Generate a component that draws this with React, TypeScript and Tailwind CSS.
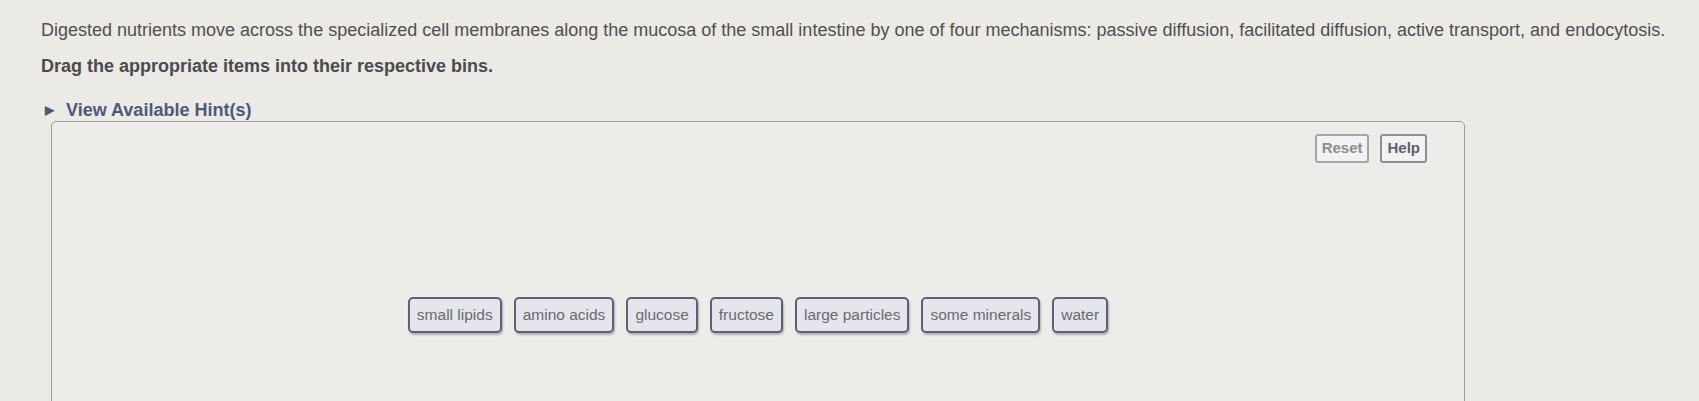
import React from "react";

const items = [
  "small lipids",
  "amino acids",
  "glucose",
  "fructose",
  "large particles",
  "some minerals",
  "water",
];

export default function App() {
  return (
    <div
      className="w-[1699px] h-[401px] overflow-hidden bg-[#ebeae5] text-[#505050]"
      style={{ fontFamily: '"Liberation Sans", Arial, sans-serif' }}
    >
      <div className="pl-[41px] pt-[19px]">
        <p className="whitespace-nowrap text-[18px] leading-[22px]">
          Digested nutrients move across the specialized cell membranes along the mucosa of the small intestine by one of four mechanisms: passive diffusion, facilitated diffusion, active transport, and endocytosis.
        </p>
        <p className="mt-[14px] text-[18px] leading-[22px] font-bold text-[#4a4a4f]">
          Drag the appropriate items into their respective bins.
        </p>
        <div className="mt-[22px] flex items-center gap-[12px] pl-[4px] text-[18px] leading-[22px] font-bold text-[#4b5a7c]">
          <span className="text-[12px]">&#9654;</span>
          <span>View Available Hint(s)</span>
        </div>
      </div>

      <div className="ml-[51px] w-[1414px] h-[300px] rounded-[5px] border border-[#9c9c9c] bg-[#edece8]">
        <div className="flex justify-end gap-[11px] pr-[37px] pt-[12px]">
          <button className="h-[29px] rounded-[3px] border-2 border-[#a3a5ab] bg-[#f2f2f0] px-[5px] text-[15px] font-bold text-[#8a8d96]">
            Reset
          </button>
          <button className="h-[29px] rounded-[3px] border-2 border-[#8c8f98] bg-[#f2f2f0] px-[5px] text-[15px] font-bold text-[#5d6172]">
            Help
          </button>
        </div>
        <div className="mt-[134px] flex justify-center gap-[12px]">
          {items.map((item) => (
            <div
              key={item}
              className="h-[36px] rounded-[5px] border-2 border-[#5d6078] bg-[#e4e6ec] px-[7px] flex items-center text-[15.5px] text-[#6a6a70] shadow-[1px_2px_2px_rgba(0,0,0,0.25)]"
            >
              {item}
            </div>
          ))}
        </div>
      </div>
    </div>
  );
}
